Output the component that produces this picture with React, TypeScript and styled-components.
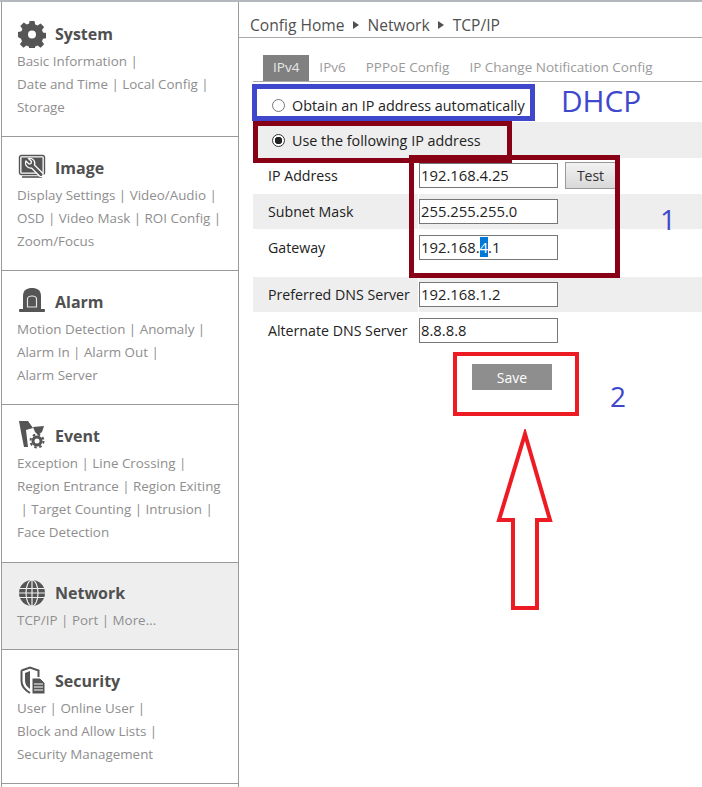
import styled, { createGlobalStyle } from "styled-components"

const GlobalStyle = createGlobalStyle`
	html, body {
		margin: 0;
		padding: 0;
		background: white;
	}
	body {
		font-family: "Open Sans", "Noto Sans", sans-serif;
		overflow: hidden;
	}
`

const GearIcon = () => (
	<svg width="28" height="28" viewBox="0 0 28 28">
		<path
			fill="#555"
			fillRule="evenodd"
			d="M11.500 1h5l.7 3.600 2.400 1 3-2.100 3.500 3.500-2.100 3 1 2.400 3.600.7v5l-3.600.7-1 2.400 2.100 3-3.500 3.500-3-2.100-2.400 1-.7 3.600h-5l-.7-3.600-2.400-1-3 2.100-3.500-3.500 2.100-3-1-2.400L-.2 17v-5l3.600-.7 1-2.400-2.100-3 3.500-3.500 3 2.100 2.400-1zM14 10.500a4 4 0 1 0 0 8 4 4 0 0 0 0-8z"
		/>
	</svg>
)

const MonitorIcon = () => (
	<svg width="28" height="28" viewBox="0 0 28 28" overflow="visible">
		<rect x="1.500" y="1.500" width="25" height="19" rx="2" fill="none" stroke="#555" strokeWidth="1.400" />
		<rect x="3.500" y="3.500" width="21" height="15" fill="#555" />
		<path d="M4 23h20" stroke="#555" strokeWidth="1.600" />
		<path
			d="M8 7l3 3 2-.5.5-2-3-3a5 5 0 0 1 6 6.500l8 8a2 2 0 0 1-3 3l-8-8a5 5 0 0 1-5.500-7z"
			fill="#555"
			stroke="#fff"
			strokeWidth="1.200"
		/>
	</svg>
)

const AlarmIcon = () => (
	<svg width="28" height="28" viewBox="0 0 28 28" overflow="visible">
		<path fill="#555" d="M5 21V8C5 2 9 0 14 0s9 2 9 8v13z" />
		<path d="M9.500 19V11c0-2 2-3 4.500-3s4.500 1 4.500 3v8z" fill="none" stroke="#e4e4e4" strokeWidth="1.200" />
		<rect x="1" y="21" width="26" height="3" rx="1" fill="#555" />
	</svg>
)

const EventIcon = () => (
	<svg width="28" height="28" viewBox="0 0 28 28" overflow="visible">
		<path fill="#555" d="M1-1h9l5 7-7 2 2 17H6L3 10z" />
		<path fill="#555" d="M15 5l11-1-2 6-4 3-3-3z" />
		<circle cx="19" cy="19" r="4" fill="#fff" stroke="#555" strokeWidth="3" />
		<circle cx="19" cy="19" r="6.500" fill="none" stroke="#555" strokeWidth="2" strokeDasharray="2.500 2.600" />
	</svg>
)

const GlobeIcon = () => (
	<svg width="28" height="28" viewBox="0 0 28 28">
		<circle cx="14" cy="14" r="13" fill="#555" />
		<g stroke="#eee" strokeWidth="1.200" fill="none">
			<path d="M1 9.500h26M1 14h26M1 18.500h26" />
			<path d="M14 1v26" />
			<ellipse cx="14" cy="14" rx="6" ry="13" />
		</g>
	</svg>
)

const ShieldIcon = () => (
	<svg width="28" height="28" viewBox="0 0 28 28" overflow="visible">
		<path d="M3.500 3.500L12 .5l8.500 3V10M3.500 3.500V14c0 5 3.500 9 8.500 12" fill="none" stroke="#555" strokeWidth="2" />
		<path d="M12 4L7 6v8c0 3 2 6 5 8z" fill="#555" />
		<path d="M14 11h8l5 5v11H14z" fill="#555" stroke="#fff" strokeWidth="1" />
		<path d="M16 17h9M16 20h9M16 23h9" stroke="#fff" strokeWidth="1" />
	</svg>
)

const sections = [
	{ title: "System", icon: <GearIcon />, lines: ["Basic Information |", "Date and Time | Local Config |", "Storage"], height: 134 },
	{ title: "Image", icon: <MonitorIcon />, lines: ["Display Settings | Video/Audio |", "OSD | Video Mask | ROI Config |", "Zoom/Focus"], height: 134 },
	{ title: "Alarm", icon: <AlarmIcon />, lines: ["Motion Detection | Anomaly |", "Alarm In | Alarm Out |", "Alarm Server"], height: 134 },
	{ title: "Event", icon: <EventIcon />, lines: ["Exception | Line Crossing |", "Region Entrance | Region Exiting", "\u00a0| Target Counting | Intrusion |", "Face Detection"], height: 158 },
	{ title: "Network", icon: <GlobeIcon />, lines: ["TCP/IP | Port | More..."], height: 87, active: true },
	{ title: "Security", icon: <ShieldIcon />, lines: ["User | Online User |", "Block and Allow Lists |", "Security Management"], height: 134 },
]

const App = () => {
	return (
		<Page>
			<GlobalStyle />
			<Sidebar>
				{sections.map((s) => (
					<Section key={s.title} $active={s.active} $height={s.height}>
						<SectionHead>
							<IconBox>{s.icon}</IconBox>
							<SectionTitle>{s.title}</SectionTitle>
						</SectionHead>
						{s.lines.map((line) => (
							<SectionLine key={line}>{line}</SectionLine>
						))}
					</Section>
				))}
			</Sidebar>
			<Main>
				<Breadcrumb>
					<span>Config Home</span>
					<Caret />
					<span>Network</span>
					<Caret />
					<span>TCP/IP</span>
				</Breadcrumb>
				<Content>
					<Tabs>
						<Tab $active>IPv4</Tab>
						<Tab>IPv6</Tab>
						<Tab>PPPoE Config</Tab>
						<Tab>IP Change Notification Config</Tab>
					</Tabs>
					<AutoRow>
						<Radio />
						<span>Obtain an IP address automatically</span>
					</AutoRow>
					<RadioRow $shade>
						<Radio $checked />
						<span>Use the following IP address</span>
					</RadioRow>
					<FormRow>
						<LabelCell>IP Address</LabelCell>
						<ValueCell>
							<Field>192.168.4.25</Field>
							<TestButton>Test</TestButton>
						</ValueCell>
					</FormRow>
					<FormRow>
						<LabelCell $shade>Subnet Mask</LabelCell>
						<ValueCell $shade>
							<Field>255.255.255.0</Field>
						</ValueCell>
					</FormRow>
					<FormRow $last>
						<LabelCell>Gateway</LabelCell>
						<ValueCell>
							<Field>
								192.168.<Selected>4</Selected>.1
							</Field>
						</ValueCell>
					</FormRow>
					<FormRow>
						<LabelCell $shade>Preferred DNS Server</LabelCell>
						<ValueCell $shade>
							<Field>192.168.1.2</Field>
						</ValueCell>
					</FormRow>
					<FormRow>
						<LabelCell>Alternate DNS Server</LabelCell>
						<ValueCell>
							<Field>8.8.8.8</Field>
						</ValueCell>
					</FormRow>
					<SaveRow>
						<SaveButton>Save</SaveButton>
					</SaveRow>
				</Content>
			</Main>

			<BlueBox />
			<MaroonBoxRadio />
			<MaroonBoxFields />
			<RedBox />
			<DhcpNote>DHCP</DhcpNote>
			<StepOne>1</StepOne>
			<StepTwo>2</StepTwo>
			<Arrow width="60" height="184" viewBox="0 0 60 184">
				<path d="M30 5L4 91H18V179H42V91H55Z" fill="none" stroke="#ed1c24" strokeWidth="4" />
			</Arrow>
		</Page>
	)
}

export default App

const Page = styled.div`
	position: relative;
	display: flex;
	width: 702px;
	height: 787px;
	overflow: hidden;
	background: white;
	border-top: 2px solid #b4b8bc;
	box-sizing: border-box;
`

const Sidebar = styled.aside`
	width: 238px;
	flex-shrink: 0;
	box-sizing: border-box;
	padding-top: 1px;
	border-left: 1px solid #9a9a9a;
	border-right: 1px solid #9a9a9a;
	margin-left: 1px;
`

const Section = styled.section<{ $active?: boolean; $height: number }>`
	height: ${(p) => p.$height}px;
	box-sizing: border-box;
	padding: ${(p) => (p.$active ? 16 : 17)}px 0 0 15px;
	border-bottom: 1px solid #9a9a9a;
	background: ${(p) => (p.$active ? "#eeeeee" : "white")};
`

const SectionHead = styled.div`
	display: flex;
	align-items: center;
	height: 28px;
	gap: 9px;
	margin-bottom: 2px;
`

const IconBox = styled.div`
	width: 28px;
	height: 28px;
	margin-left: 1px;
	display: flex;
`

const SectionTitle = styled.h3`
	margin: 0;
	font-size: 16px;
	font-weight: 700;
	color: #505050;
`

const SectionLine = styled.div`
	font-size: 13.4px;
	line-height: 23.15px;
	color: #8e8e8e;
	white-space: nowrap;
`

const Main = styled.main`
	flex: 1;
	min-width: 0;
`

const Breadcrumb = styled.div`
	display: flex;
	align-items: center;
	gap: 8.5px;
	height: 36px;
	padding: 10px 0 0 11px;
	box-sizing: border-box;
	border-bottom: 1px solid #aaaaaa;
	font-size: 15.6px;
	color: #505050;
`

const Caret = styled.i`
	width: 0;
	height: 0;
	border-left: 6px solid #505050;
	border-top: 4px solid transparent;
	border-bottom: 4px solid transparent;
`

const Content = styled.div`
	padding-left: 14px;
`

const Tabs = styled.div`
	display: flex;
	align-items: flex-end;
	height: 44px;
	border-bottom: 1px solid #aaaaaa;
	padding-left: 10px;
	box-sizing: border-box;
`

const Tab = styled.div<{ $active?: boolean }>`
	height: 26px;
	padding: 0 10px 2px;
	box-sizing: border-box;
	display: flex;
	align-items: center;
	font-size: 13.5px;
	color: ${(p) => (p.$active ? "#e8e8e8" : "#9a9a9a")};
	background: ${(p) => (p.$active ? "#808080" : "transparent")};
`

const RadioRow = styled.div<{ $shade?: boolean }>`
	display: flex;
	align-items: center;
	gap: 7px;
	height: 36px;
	padding-left: 19px;
	font-size: 14.35px;
	color: #222;
	background: ${(p) => (p.$shade ? "#eeeeee" : "white")};
`

const AutoRow = styled(RadioRow)`
	height: 40px;
	padding-top: 6px;
	box-sizing: border-box;
`

const Radio = styled.span<{ $checked?: boolean }>`
	width: 13px;
	height: 13px;
	box-sizing: border-box;
	border: 1px solid ${(p) => (p.$checked ? "#333" : "#777")};
	border-radius: 50%;
	background: ${(p) => (p.$checked ? "radial-gradient(circle, #222 0 3.5px, white 4px)" : "white")};
`

const FormRow = styled.div<{ $last?: boolean }>`
	display: flex;
	height: ${(p) => (p.$last ? 47 : 36)}px;
`

const LabelCell = styled.div<{ $shade?: boolean }>`
	width: 165px;
	height: 35px;
	flex-shrink: 0;
	box-sizing: border-box;
	padding-left: 15px;
	display: flex;
	align-items: center;
	font-size: 14.2px;
	color: #222;
	white-space: nowrap;
	background: ${(p) => (p.$shade ? "#eeeeee" : "white")};
`

const ValueCell = styled.div<{ $shade?: boolean }>`
	flex: 1;
	height: 35px;
	margin-left: 1px;
	display: flex;
	align-items: center;
	gap: 7px;
	background: ${(p) => (p.$shade ? "#eeeeee" : "white")};
`

const Field = styled.div`
	width: 139px;
	height: 25px;
	box-sizing: border-box;
	border: 1px solid #777;
	background: white;
	padding-left: 1px;
	font-size: 14.8px;
	line-height: 23px;
	color: #222;
`

const Selected = styled.span`
	background: #0078d7;
	color: white;
`

const TestButton = styled.button`
	width: 51px;
	height: 27px;
	padding: 0;
	border: 1px solid #999;
	background: linear-gradient(#f2f2f2, #d8d8d8);
	font-family: inherit;
	font-size: 14px;
	color: #333;
`

const SaveRow = styled.div`
	display: flex;
	padding: 15px 0 0 219px;
`

const SaveButton = styled.button`
	width: 80px;
	height: 26px;
	padding: 0;
	border: none;
	background: #8e8e8e;
	font-family: inherit;
	font-size: 14px;
	color: white;
`

const BlueBox = styled.div`
	position: absolute;
	left: 252px;
	top: 82px;
	width: 283px;
	height: 37px;
	box-sizing: border-box;
	border: 5px solid #3f48cc;
`

const MaroonBoxRadio = styled.div`
	position: absolute;
	left: 253px;
	top: 119px;
	width: 259px;
	height: 42px;
	box-sizing: border-box;
	border: 5px solid #880015;
`

const MaroonBoxFields = styled.div`
	position: absolute;
	left: 409px;
	top: 153px;
	width: 211px;
	height: 123px;
	box-sizing: border-box;
	border: 5px solid #880015;
`

const RedBox = styled.div`
	position: absolute;
	left: 453px;
	top: 350px;
	width: 126px;
	height: 64px;
	box-sizing: border-box;
	border: 4px solid #ed1c24;
`

const Note = styled.div`
	position: absolute;
	color: #3f48cc;
	font-family: "Open Sans", sans-serif;
	line-height: 1;
`

const DhcpNote = styled(Note)`
	left: 561px;
	top: 84px;
	font-size: 29.8px;
`

const StepOne = styled(Note)`
	left: 660px;
	top: 203px;
	font-size: 28px;
`

const StepTwo = styled(Note)`
	left: 610px;
	top: 380px;
	font-size: 28px;
`

const Arrow = styled.svg`
	position: absolute;
	left: 495px;
	top: 427px;
`
